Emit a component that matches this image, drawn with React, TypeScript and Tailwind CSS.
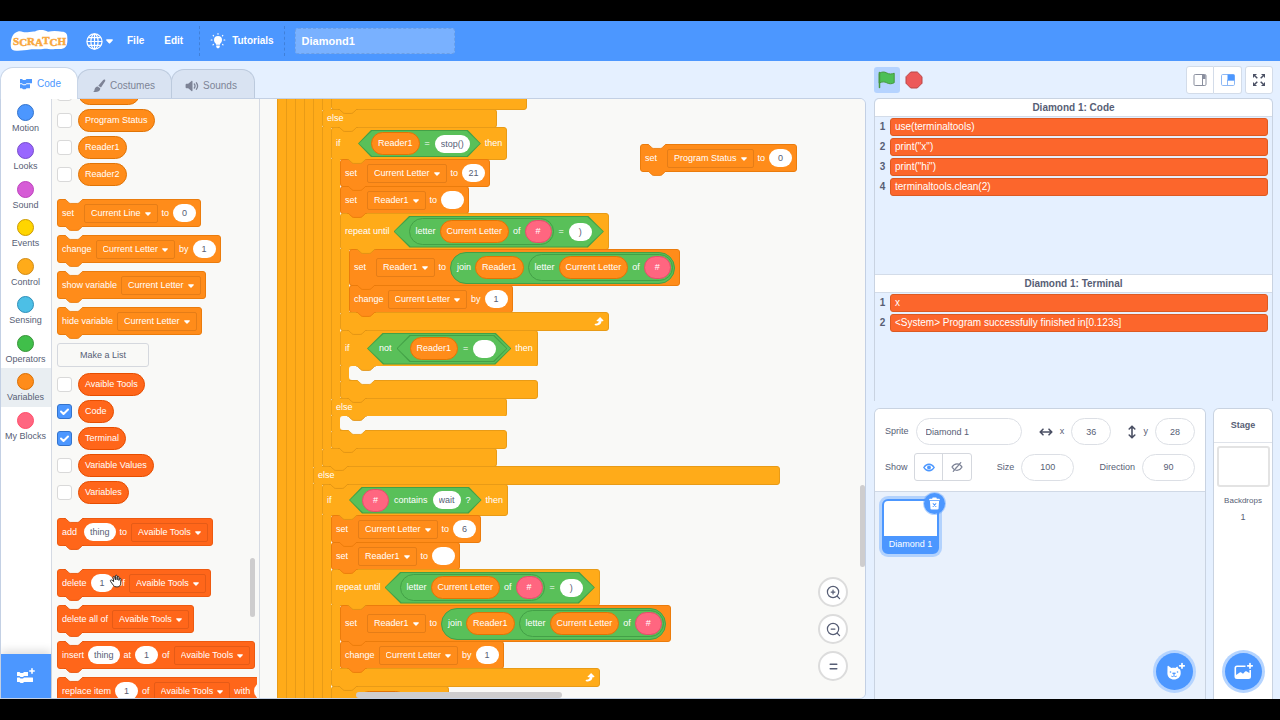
import type { ReactNode } from "react";
import { clsx } from "clsx";

const CATEGORIES = [
    { name: "Motion", dot: "bg-[#4c97ff] border-[#3373cc]" },
    { name: "Looks", dot: "bg-[#9966ff] border-[#774dcb]" },
    { name: "Sound", dot: "bg-[#d65cd6] border-[#bd42bd]" },
    { name: "Events", dot: "bg-[#ffd500] border-[#cc9900]" },
    { name: "Control", dot: "bg-[#ffab19] border-[#cf8b17]" },
    { name: "Sensing", dot: "bg-[#4cbfe6] border-[#2e8eb8]" },
    { name: "Operators", dot: "bg-[#40bf4a] border-[#389438]" },
    { name: "Variables", dot: "bg-[#ff8c1a] border-[#db6e00]" },
    { name: "My Blocks", dot: "bg-[#ff6680] border-[#ff4d6a]" },
];

const TONES = {
    data: { box: "bg-[#ff8c1a] border-[#eb7c0c]", fill: "#ff8c1a", line: "#e87a0a" },
    list: { box: "bg-[#ff661a] border-[#ee5a10]", fill: "#ff661a", line: "#e64d00" },
    control: { box: "bg-[#ffab19] border-[#e89b17]", fill: "#ffab19", line: "#dd9215" },
};

type Tone = keyof typeof TONES;

/* ---------- block pieces ---------- */

function Tab({ fill, line, className }: { fill: string; line: string; className: string }) {
    return (
        <svg viewBox="0 0 36 9" fill={fill} className={clsx("absolute z-10 h-[5px] w-5", className)}>
            <path
                d="M0 0c2 0 3 1 4 2l4 4c1 1 2 2 4 2h12c2 0 3-1 4-2l4-4c1-1 2-2 4-2"
                stroke={line}
                strokeWidth="1.5"
            />
        </svg>
    );
}

function Statement({ tone = "data", tall, first, children }: { tone?: Tone; tall?: boolean; first?: boolean; children: ReactNode }) {
    const t = TONES[tone];
    return (
        <div
            className={clsx(
                "relative -mb-px flex w-max items-center gap-1 rounded-[3px] border px-1",
                tall ? "h-[37px]" : "h-7",
                t.box
            )}
        >
            {first && <Tab fill="#f9f9f7" line={t.line} className="-top-px left-[6px]" />}
            {children}
            <Tab fill={t.fill} line={t.line} className="top-full left-[6px]" />
        </div>
    );
}

function Lead({ children }: { children: ReactNode }) {
    return <span className="min-w-[18px]">{children}</span>;
}

function Caret({ className }: { className: string }) {
    return (
        <svg viewBox="0 0 8 5" className={className} fill="#fff">
            <path d="M1 0h6c.8 0 1.2.8.6 1.4L4.7 4.5c-.4.4-1 .4-1.4 0L.4 1.4C-.2.8.2 0 1 0z" />
        </svg>
    );
}

function Drop({ value }: { value: string }) {
    return (
        <span className="relative flex">
            <select
                aria-label={value}
                className="field-sizing-content h-[19px] appearance-none rounded-[2px] border border-black/10 bg-transparent pr-4 pl-[6px] leading-none outline-none"
            >
                <option>{value}</option>
            </select>
            <Caret className="pointer-events-none absolute top-2 right-[7px] h-1 w-[6px]" />
        </span>
    );
}

function Slot({ value = "", label = "value" }: { value?: string; label?: string }) {
    return (
        <input
            type="text"
            aria-label={label}
            defaultValue={value}
            className="field-sizing-content h-[18px] min-w-[23px] rounded-full bg-white px-[6px] text-center leading-none text-[#575e75] outline-none"
        />
    );
}

function Var({ name, list }: { name?: string; list?: boolean }) {
    return (
        <span
            className={clsx(
                "flex h-[23px] items-center rounded-full border px-[6px]",
                list ? "border-[#e64d00] bg-[#ff661a]" : "border-[#e07406] bg-[#ff8c1a]",
                !name && "w-[62px]"
            )}
        >
            {name}
        </span>
    );
}

function Hash() {
    return (
        <span className="flex h-[23px] w-[27px] items-center justify-center rounded-full border border-[#e64d6a] bg-[#ff6680]">
            #
        </span>
    );
}

function Oval({ tall, children }: { tall?: boolean; children: ReactNode }) {
    return (
        <span
            className={clsx(
                "flex items-center gap-1 rounded-full border border-[#43a047] bg-[#59c059] pr-px pl-[6px]",
                tall ? "h-8" : "h-[27px]"
            )}
        >
            {children}
        </span>
    );
}

const HEX_13 =
    "[clip-path:polygon(13px_0,calc(100%_-_13px)_0,100%_50%,calc(100%_-_13px)_100%,13px_100%,0_50%)]";
const HEX_16 =
    "[clip-path:polygon(16px_0,calc(100%_-_16px)_0,100%_50%,calc(100%_-_16px)_100%,16px_100%,0_50%)]";

function Hex({ tall, pad = "pl-3 pr-[10px]", children }: { tall?: boolean; pad?: string; children: ReactNode }) {
    const clip = tall ? HEX_16 : HEX_13;
    return (
        <span className={clsx("flex bg-[#43a047] p-px", tall ? "h-8" : "h-[27px]", clip)}>
            <span className={clsx("flex items-center gap-[5px] bg-[#59c059]", pad, clip)}>{children}</span>
        </span>
    );
}

/* ---------- C shaped blocks ---------- */

function Bar({ height, foot, loop, children }: { height: string; foot?: boolean; loop?: boolean; children?: ReactNode }) {
    const t = TONES.control;
    return (
        <div className={clsx("relative -mb-px flex items-center gap-1 rounded-[3px] border px-1", height, t.box)}>
            {children}
            {loop && (
                <svg viewBox="0 0 24 24" className="ml-auto h-[11px] w-[11px]" fill="#fff">
                    <path d="M22.5 9.5 16.500 3a1.300 1.300 0 0 0-2 0L8.500 9.500c-.8 1 0 2 1 2h3c-.3 3.500-2.500 5.500-7.500 5.200-1.500 0-2 2.800-.3 3.300C12 22.300 18.300 18 18.500 11.500h3c1.300 0 1.800-1.200 1-2z" />
                </svg>
            )}
            <Tab fill={t.fill} line={t.line} className={clsx("top-full", foot ? "left-[6px]" : "left-[15px]")} />
        </div>
    );
}

function Mouth({ children }: { children?: ReactNode }) {
    return (
        <div className={clsx("relative flex", !children && "h-[14px] bg-[#ffab19]")}>
            <div className="relative z-[1] -mb-px w-[9px] shrink-0 border-l border-[#e89b17] bg-[#ffab19]" />
            {children ? (
                <div className="w-0">{children}</div>
            ) : (
                <div className="flex-1 rounded-l-[3px] bg-[#f9f9f7]">
                    <Tab fill="#f9f9f7" line="#e89b17" className="top-full left-4" />
                </div>
            )}
        </div>
    );
}

interface IWrap {
    head?: ReactNode;
    height?: string;
    width?: string;
    loop?: boolean;
    open?: boolean;
    hasElse?: boolean;
    other?: ReactNode;
    children?: ReactNode;
}

function Wrap({ head, height = "h-8", width, loop, open, hasElse, other, children }: IWrap) {
    return (
        <div className={clsx("flex w-max flex-col", width)}>
            {head && <Bar height={height}>{head}</Bar>}
            <Mouth>{children}</Mouth>
            {hasElse && (
                <>
                    <Bar height="h-[19px]">else</Bar>
                    <Mouth>{other}</Mouth>
                </>
            )}
            {!open && <Bar height="h-[19px]" foot loop={loop} />}
        </div>
    );
}

function LetterOf() {
    return (
        <Oval>
            letter
            <Var name="Current Letter" />
            of
            <Hash />
        </Oval>
    );
}

function ReadUntilBracket({ index }: { index: string }) {
    return (
        <>
            <Statement>
                <Lead>set</Lead>
                <Drop value="Current Letter" />
                to
                <Slot value={index} />
            </Statement>
            <Statement>
                <Lead>set</Lead>
                <Drop value="Reader1" />
                to
                <Slot />
            </Statement>
            <Wrap
                height="h-[37px]"
                loop
                head={
                    <>
                        repeat until
                        <Hex tall pad="pl-[14px] pr-[11px]">
                            <LetterOf />
                            <span>=</span>
                            <Slot value=")" />
                        </Hex>
                    </>
                }
            >
                <Statement tall>
                    <Lead>set</Lead>
                    <Drop value="Reader1" />
                    to
                    <Oval tall>
                        join
                        <Var name="Reader1" />
                        <LetterOf />
                    </Oval>
                </Statement>
                <Statement>
                    change
                    <Drop value="Current Letter" />
                    by
                    <Slot value="1" />
                </Statement>
            </Wrap>
        </>
    );
}

function Script() {
    const readerBranch = (
        <Wrap
            hasElse
            height="h-[33px]"
            head={
                <>
                    <Lead>if</Lead>
                    <Hex>
                        <Var name="Reader1" />
                        <span>=</span>
                        <Slot value="stop()" />
                    </Hex>
                    then
                </>
            }
        >
            <ReadUntilBracket index="21" />
            <Wrap
                height="h-[37px]"
                head={
                    <>
                        <Lead>if</Lead>
                        <Hex tall pad="pl-[11px] pr-[3px]">
                            not
                            <Hex>
                                <Var name="Reader1" />
                                <span>=</span>
                                <Slot />
                            </Hex>
                        </Hex>
                        then
                    </>
                }
            />
        </Wrap>
    );

    const waitBranch = (
        <Wrap
            open
            head={
                <>
                    <Lead>if</Lead>
                    <Hex>
                        <Hash />
                        contains
                        <Slot value="wait" />
                        ?
                    </Hex>
                    then
                </>
            }
        >
            <ReadUntilBracket index="6" />
            <Wrap
                open
                width="min-w-[118px]"
                head={
                    <>
                        <Lead>if</Lead>
                        <Var name="Reader1" />
                    </>
                }
            />
        </Wrap>
    );

    const dispatch = (
        <Wrap open hasElse width="min-w-[467px]" other={waitBranch}>
            <Wrap hasElse width="min-w-[175px]" other={readerBranch}>
                <Bar height="h-[19px] w-[196px]" foot />
            </Wrap>
        </Wrap>
    );

    return (
        <Wrap open>
            <Wrap open>
                <Wrap open>
                    <Wrap open>{dispatch}</Wrap>
                </Wrap>
            </Wrap>
        </Wrap>
    );
}

/* ---------- palette ---------- */

function VarRow({ name, list, checked }: { name?: string; list?: boolean; checked?: boolean }) {
    return (
        <label className="flex h-[27px] items-center gap-[6px]">
            <span className="relative flex">
                <input
                    type="checkbox"
                    defaultChecked={checked}
                    className="peer h-[15px] w-[15px] appearance-none rounded-[3px] border border-[#d9d9d9] bg-white checked:border-[#3373cc] checked:bg-[#4c97ff]"
                />
                <svg
                    viewBox="0 0 15 15"
                    className="pointer-events-none absolute inset-0 hidden peer-checked:block"
                    fill="none"
                    stroke="#fff"
                    strokeWidth="2"
                    strokeLinecap="round"
                    strokeLinejoin="round"
                >
                    <path d="M4 7.5l2.500 2.500L11 5.500" />
                </svg>
            </span>
            <Var name={name} list={list} />
        </label>
    );
}

function Palette() {
    return (
        <div className="relative w-[208px] shrink-0 overflow-hidden border-r border-[#d5dae3] bg-[#f9f9f7]">
            <div className="absolute inset-y-0 left-0 w-[205px] overflow-hidden pl-[5px] text-white">
                <div className="-mt-[19px]">
                    <VarRow />
                    <VarRow name="Program Status" />
                    <VarRow name="Reader1" />
                    <VarRow name="Reader2" />
                </div>
                <div className="mt-[11px] flex flex-col gap-[9px]">
                    <Statement first>
                        <Lead>set</Lead>
                        <Drop value="Current Line" />
                        to
                        <Slot value="0" />
                    </Statement>
                    <Statement first>
                        change
                        <Drop value="Current Letter" />
                        by
                        <Slot value="1" />
                    </Statement>
                    <Statement first>
                        show variable
                        <Drop value="Current Letter" />
                    </Statement>
                    <Statement first>
                        hide variable
                        <Drop value="Current Letter" />
                    </Statement>
                    <button className="h-6 w-[92px] rounded-[3px] border border-[#d5d8de] text-[#575e75]">Make a List</button>
                </div>
                <div className="mt-1">
                    <VarRow list name="Avaible Tools" />
                    <VarRow list name="Code" checked />
                    <VarRow list name="Terminal" checked />
                    <VarRow list name="Variable Values" />
                    <VarRow list name="Variables" />
                </div>
                <div className="mt-3">
                    <Statement tone="list" first>
                        <Lead>add</Lead>
                        <Slot value="thing" />
                        to
                        <Drop value="Avaible Tools" />
                    </Statement>
                </div>
                <div className="mt-6 flex flex-col gap-[9px]">
                    <Statement tone="list" first>
                        delete
                        <Slot value="1" />
                        of
                        <Drop value="Avaible Tools" />
                    </Statement>
                    <Statement tone="list" first>
                        delete all of
                        <Drop value="Avaible Tools" />
                    </Statement>
                    <Statement tone="list" first>
                        insert
                        <Slot value="thing" />
                        at
                        <Slot value="1" />
                        of
                        <Drop value="Avaible Tools" />
                    </Statement>
                    <Statement tone="list" first>
                        replace item
                        <Slot value="1" />
                        of
                        <Drop value="Avaible Tools" />
                        with
                        <Slot value="thing" />
                    </Statement>
                </div>
            </div>
            <div className="absolute top-[459px] right-1 h-[59px] w-[5px] rounded-full bg-[#cecdce]" />
            {/* open hand pointer */}
            <svg viewBox="0 0 24 24" className="absolute top-[475px] left-[57px] z-20 h-[14px] w-[14px]" fill="#fff" stroke="#222" strokeWidth="1.6" strokeLinejoin="round">
                <path d="M8 13 5 10.500c-1.500-1-3.500.5-2.500 2L8 20c1 1.500 2.500 2 4.500 2h2c3.500 0 5.500-2.500 5.500-6l.5-7c0-2-2.500-2-2.800-.2L17 11V5.500c0-2-2.800-2-3 0V10 3.500c-.2-2-3-2-3 0V10L9.800 5.300C9.200 3.500 6.700 4 7 6z" />
            </svg>
        </div>
    );
}

function Categories() {
    return (
        <nav className="flex w-[51px] shrink-0 flex-col justify-between border-r border-[#d5dae3] bg-white">
            <div className="flex h-[346px] flex-col">
                {CATEGORIES.map((c) => (
                    <button
                        key={c.name}
                        className={clsx(
                            "flex flex-1 flex-col items-center gap-[2px] pt-[5px] pr-px text-[9px] leading-[10px] whitespace-nowrap text-[#575e75]",
                            c.name === "Variables" && "bg-[#e9eef2]"
                        )}
                    >
                        <span className={clsx("h-[17px] w-[17px] shrink-0 rounded-full border", c.dot)} />
                        {c.name}
                    </button>
                ))}
            </div>
            <button
                aria-label="Add Extension"
                className="flex h-11 items-center justify-center bg-[#4c97ff] shadow-[0_-4px_8px_rgba(0,0,0,0.12)]"
            >
                <svg viewBox="0 0 20 16" className="h-4 w-5" fill="#fff">
                    <path d="M1.500 4h2l1 1h2.500l1-1h4v4H8l-1 1H4.500l-1-1h-2A.5.5 0 0 1 1 7.500V4.500a.5.5 0 0 1 .5-.5z" />
                    <path d="M1.500 9.600h2l1 1H7l1-1h8.500a.5.5 0 0 1 .5.5v3.400a.5.5 0 0 1-.5.500H8l-1 1H4.500l-1-1h-2a.5.5 0 0 1-.5-.5v-3.400a.5.5 0 0 1 .5-.5z" />
                    <path d="M16 .8v4.400M13.800 3h4.400" stroke="#fff" strokeWidth="1.600" strokeLinecap="round" />
                </svg>
            </button>
        </nav>
    );
}

/* ---------- workspace ---------- */

function ZoomButton({ label, children }: { label: string; children: ReactNode }) {
    return (
        <button
            aria-label={label}
            className="flex h-[30px] w-[30px] items-center justify-center rounded-full border-2 border-[#dcdcdc] bg-white"
        >
            <svg viewBox="0 0 16 16" className="h-[15px] w-[15px]" fill="none" stroke="#575e75" strokeWidth="1.3" strokeLinecap="round">
                {children}
            </svg>
        </button>
    );
}

function Workspace() {
    return (
        <main className="relative min-w-0 flex-1 overflow-hidden bg-[#f9f9f7] text-white">
            <div className="absolute -top-2 left-[17px]">
                <Script />
            </div>
            <div className="absolute top-[45px] left-[380px]">
                <Statement first>
                    <Lead>set</Lead>
                    <Drop value="Program Status" />
                    to
                    <Slot value="0" />
                </Statement>
            </div>
            <div className="absolute right-[17px] bottom-[17px] z-20 flex flex-col gap-[7px]">
                <ZoomButton label="Zoom in">
                    <circle cx="7.5" cy="7.5" r="6" />
                    <path d="M12 12l2.500 2.500M5.500 7.500h4M7.500 5.500v4" />
                </ZoomButton>
                <ZoomButton label="Zoom out">
                    <circle cx="7.5" cy="7.5" r="6" />
                    <path d="M12 12l2.500 2.500M5.500 7.500h4" />
                </ZoomButton>
                <ZoomButton label="Reset zoom">
                    <path d="M4.500 5.500h7M4.500 10.500h7" strokeWidth="1.600" />
                </ZoomButton>
            </div>
            <div className="absolute top-[386px] right-0 h-[82px] w-[5px] rounded-full bg-[#cecdce]" />
            <div className="absolute bottom-0 left-24 z-20 h-[6px] w-[206px] rounded-full bg-[#cecdce]" />
        </main>
    );
}

/* ---------- top bar and tabs ---------- */

function MenuBar() {
    return (
        <header className="flex h-10 shrink-0 items-center bg-[#4c97ff] pl-[10px] text-[10px] font-bold text-white">
            <a href="#home" aria-label="Scratch">
                <svg viewBox="0 0 58 24" className="h-6 w-[58px]">
                    <path
                        d="M5 4c3-2 5-2.500 8-1 4 1 8-1 12-.5 4-2 9-2 13 .2 5-1.200 10-.7 14 0 4 0 5.500 2.500 5.300 6 .5 5-.3 9.500-4.300 10.800-3 1-5 .2-8 .5-5 .8-8-.8-12 0-5 1-9-.5-13 .5-4 1.200-8 .5-12 1.200C3.500 22.200 1 20.800.800 17.500.500 12 1.500 6.500 5 4z"
                        fill="#fff"
                    />
                    <text
                        x="3"
                        y="16"
                        dy="0 1 -1 1 -2 2 -1"
                        fontFamily="Liberation Serif, serif"
                        fontWeight="bold"
                        fontSize="11"
                        fill="#f9a83f"
                        stroke="#f9a83f"
                        strokeWidth=".5"
                    >
                        SCRATCH
                    </text>
                </svg>
            </a>
            <button aria-label="Language" className="ml-[18px] flex items-center gap-[3px]">
                <svg viewBox="0 0 18 18" className="h-[17px] w-[17px]" fill="none" stroke="#fff" strokeWidth="1.3">
                    <circle cx="9" cy="9" r="8" />
                    <ellipse cx="9" cy="9" rx="3.8" ry="8" />
                    <path d="M9 1v16M1 9h16M2.300 5h13.400M2.300 13h13.400" />
                </svg>
                <Caret className="h-[5px] w-[7px]" />
            </button>
            <button className="ml-[14px]">File</button>
            <button className="ml-5">Edit</button>
            <div className="ml-4 flex h-[30px] items-center border-x border-dashed border-black/15 px-[10px]">
                <button className="flex items-center gap-[6px]">
                    <svg viewBox="0 0 16 16" className="h-4 w-4" fill="#fff">
                        <path d="M8 3a4 4 0 0 0-4 4c0 1.600.8 2.500 1.500 3.300.4.500.5.900.5 1.400h4c0-.5.1-.9.5-1.400C11.200 9.500 12 8.600 12 7a4 4 0 0 0-4-4zM6.200 12.500h3.600v1c0 .8-.8 1.800-1.800 1.800s-1.800-1-1.800-1.800z" />
                        <path
                            d="M8 .6v.6M2 7h-.8M14.800 7H14M3.600 2.800l-.4-.4M12.400 2.800l.4-.4M3.400 11.400l-.4.4M12.600 11.400l.4.4"
                            stroke="#fff"
                            strokeWidth="1.2"
                            strokeLinecap="round"
                        />
                    </svg>
                    Tutorials
                </button>
            </div>
            <input
                aria-label="Project title"
                defaultValue="Diamond1"
                className="ml-[10px] h-[26px] w-40 rounded-[3px] border border-dashed border-black/10 bg-white/25 px-[6px] text-[11px] outline-none"
            />
        </header>
    );
}

function Tabs() {
    const idle = "flex h-[29px] items-center gap-1 rounded-t-[13px] border border-b-0 border-[#bccadd] bg-[#d9e3f2] pt-1 text-[#7d8396]";
    return (
        <div className="flex h-[37px] items-end text-[10px]">
            <button className="z-10 -mb-px flex h-8 w-[78px] items-center justify-center gap-1 rounded-t-[13px] border border-b-0 border-[#c9d6e8] bg-white pt-px pl-[2px] text-[#4c97ff]">
                <svg viewBox="0 0 14 12" className="h-3 w-[14px]" fill="#4c97ff">
                    <path d="M1 1h2l1 1h2.500l1-1H13v4.200H7.500l-1 1H4l-1-1H1z" />
                    <path d="M1 6.300h2l1 1h2.500l1-1H11v4H7.500l-1 1H4l-1-1H1z" />
                </svg>
                Code
            </button>
            <button className={clsx(idle, "-ml-px w-[95px] pl-[14px]")}>
                <svg viewBox="0 0 14 14" className="h-[14px] w-[14px]" fill="#7d8396">
                    <path d="M12.800.6c.6.4.6 1 .3 1.600L9 8.600 6.300 6.700 11 1.200c.5-.6 1.200-.9 1.800-.6zM5.700 7.500l2.500 1.800c.3 2.500-2.200 4.200-7.400 3.700 1-.3 1.600-1 1.700-2.200.2-1.900 1.600-3.300 3.200-3.300z" />
                </svg>
                Costumes
            </button>
            <button className={clsx(idle, "-ml-px w-[84px] pl-[13px]")}>
                <svg viewBox="0 0 14 12" className="h-3 w-[14px]" fill="#7d8396">
                    <path d="M1.500 3.800h1.700L6.500 1c.5-.4 1-.2 1 .5v9c0 .7-.5.9-1 .5L3.200 8.200H1.500C1 8.200.6 7.900.6 7.300V4.700c0-.6.4-.9.9-.9z" />
                    <path d="M9.300 4c.9 1.200.9 2.800 0 4M11.400 2.800c1.500 2 1.500 4.400 0 6.400" fill="none" stroke="#7d8396" strokeWidth="1.3" strokeLinecap="round" />
                </svg>
                Sounds
            </button>
        </div>
    );
}

/* ---------- stage side ---------- */

function StageControls() {
    const box = "flex h-7 w-7 items-center justify-center bg-white border-[#d3dce9]";
    return (
        <div className="flex h-[37px] items-center">
            <button aria-label="Go" className="flex h-[26px] w-[26px] items-center justify-center rounded-[3px] bg-[#b5d3ff]">
                <svg viewBox="0 0 18 18" className="h-[18px] w-[18px]" fill="#4cbf56" stroke="#45993d" strokeWidth="1" strokeLinejoin="round" strokeLinecap="round">
                    <path d="M1.500 2.200c2.500-1.700 5-1.500 7.300-.2 2.300 1.300 4.800 1.300 7.400.2v9.500c-2.600 1.400-5.100 1.400-7.400.1s-4.800-1.300-7.300.2z" />
                    <path d="M1.500 1.500v15" strokeWidth="1.500" />
                </svg>
            </button>
            <button aria-label="Stop" className="ml-[5px]">
                <svg viewBox="0 0 18 18" className="h-[18px] w-[18px]">
                    <path d="M5.700 1h6.600L17 5.700v6.600L12.300 17H5.700L1 12.300V5.700z" fill="#ec5959" stroke="#b84848" strokeLinejoin="round" />
                </svg>
            </button>
            <button aria-label="Small stage" className={clsx(box, "ml-auto rounded-l-[3px] border")}>
                <svg viewBox="0 0 14 12" className="h-3 w-[14px]" fill="none" stroke="#8a8f9e">
                    <rect x="1" y=".5" width="12" height="11" rx="1.2" />
                    <path d="M9.500.5v11" />
                    <path d="M10 1h2.500v4H10z" fill="#8a8f9e" stroke="none" />
                </svg>
            </button>
            <button aria-label="Large stage" className={clsx(box, "rounded-r-[3px] border border-l-0")}>
                <svg viewBox="0 0 14 12" className="h-3 w-[14px]" fill="none" stroke="#8db8f5">
                    <rect x=".5" y=".5" width="13" height="11" rx="1.2" />
                    <path d="M6.500 6v5.500M6.500 6H13" />
                    <path d="M6.500.5H13a.5.5 0 0 1 .5.5v5.500h-7z" fill="#4c97ff" stroke="none" />
                </svg>
            </button>
            <button aria-label="Full screen" className={clsx(box, "ml-[3px] rounded-[3px] border")}>
                <svg viewBox="0 0 14 14" className="h-[14px] w-[14px]" fill="#4b5064" stroke="#4b5064" strokeWidth="1.5">
                    <path d="M5.300 5.300 3 3M8.700 5.300 11 3M5.300 8.700 3 11M8.700 8.700 11 11" />
                    <path d="M1 1h4L1 5zM13 1v4L9 1zM1 13V9l4 4zM13 13H9l4-4z" stroke="none" />
                </svg>
            </button>
        </div>
    );
}

function ListMonitor({ title, rows, className }: { title: string; rows: string[]; className: string }) {
    return (
        <section className={className}>
            <h2 className="flex h-[18px] items-center justify-center border-b border-[#d3dce9] bg-white text-[10px] font-bold">{title}</h2>
            <ol className="mt-px flex flex-col gap-[2px] pr-1">
                {rows.map((row, i) => (
                    <li key={row} className="flex items-center text-[10px]">
                        <span className="w-[15px] text-center font-bold">{i + 1}</span>
                        <span className="flex h-[18px] flex-1 items-center rounded-[3px] border border-[#dc5a22] bg-[#fc662c] px-1 text-white">{row}</span>
                    </li>
                ))}
            </ol>
        </section>
    );
}

function Field({ id, label, value, width, left, icon }: { id: string; label: string; value: string; width: string; left?: boolean; icon?: ReactNode }) {
    return (
        <div className="flex items-center gap-[7px]">
            {icon}
            <label htmlFor={id}>{label}</label>
            <input
                id={id}
                defaultValue={value}
                className={clsx("h-[27px] rounded-full border border-[#dcdfe5] bg-white outline-none", left ? "px-[9px]" : "text-center", width)}
            />
        </div>
    );
}

function SpriteInfo() {
    return (
        <div className="flex flex-col gap-2 border-b border-[#d0d9e6] bg-white px-[10px] pt-[9px] pb-[10px]">
            <div className="flex items-center justify-between">
                <Field id="sprite" label="Sprite" value="Diamond 1" width="w-[106px]" left />
                <Field
                    id="x"
                    label="x"
                    value="36"
                    width="w-10"
                    icon={
                        <svg viewBox="0 0 14 8" className="h-2 w-[14px]" fill="none" stroke="#4b5064" strokeWidth="1.6" strokeLinecap="round" strokeLinejoin="round">
                            <path d="M1.500 4h11M4 1.200 1.200 4 4 6.800M10 1.200 12.800 4 10 6.800" />
                        </svg>
                    }
                />
                <Field
                    id="y"
                    label="y"
                    value="28"
                    width="w-10"
                    icon={
                        <svg viewBox="0 0 8 14" className="h-[14px] w-2" fill="none" stroke="#4b5064" strokeWidth="1.6" strokeLinecap="round" strokeLinejoin="round">
                            <path d="M4 1.500v11M1.200 4 4 1.200 6.800 4M1.200 10 4 12.800 6.800 10" />
                        </svg>
                    }
                />
            </div>
            <div className="flex items-center justify-between">
                <div className="flex items-center gap-[6px]">
                    <span>Show</span>
                    <div className="flex h-7 divide-x divide-[#d5d8de] rounded-[3px] border border-[#d5d8de]">
                        <button aria-label="Show sprite" className="w-7 px-2">
                            <svg viewBox="0 0 14 10" className="h-[9px] w-3" fill="none" stroke="#4c97ff" strokeWidth="1.7">
                                <path d="M1 5c3-5.200 9-5.200 12 0-3 5.200-9 5.200-12 0z" />
                                <circle cx="7" cy="5" r="1.4" fill="#4c97ff" />
                            </svg>
                        </button>
                        <button aria-label="Hide sprite" className="w-7 px-2">
                            <svg viewBox="0 0 14 12" className="h-[10px] w-3" fill="none" stroke="#7d8396" strokeWidth="1.5" strokeLinecap="round">
                                <path d="M1 6c3-5.200 9-5.200 12 0-3 5.200-9 5.200-12 0zM2.500 11.200 11.500.8M5.500 7.500l3-3.200" />
                            </svg>
                        </button>
                    </div>
                </div>
                <Field id="size" label="Size" value="100" width="w-[53px]" />
                <Field id="direction" label="Direction" value="90" width="w-[53px]" />
            </div>
        </div>
    );
}

function RoundButton({ label, children }: { label: string; children: ReactNode }) {
    return (
        <button
            aria-label={label}
            className="flex h-[37px] w-[37px] items-center justify-center rounded-full bg-[#4c97ff] ring-[3px] ring-[#b5d4ff]"
        >
            <svg viewBox="0 0 20 20" className="h-5 w-5" fill="#fff">
                {children}
                <path d="M17 1.500v4.600M14.700 3.800h4.600" stroke="#fff" strokeWidth="1.700" strokeLinecap="round" />
            </svg>
        </button>
    );
}

function StageSide() {
    return (
        <aside className="flex w-[399px] shrink-0 flex-col text-[#575e75]">
            <StageControls />
            <div className="flex h-[303px] shrink-0 flex-col rounded-t-[5px] border border-b-0 border-[#c9d3e1]">
                <ListMonitor
                    className="h-[176px] overflow-hidden rounded-t-[5px] border-b border-[#d3dce9]"
                    title="Diamond 1: Code"
                    rows={["use(terminaltools)", 'print("x")', 'print("hi")', "terminaltools.clean(2)"]}
                />
                <ListMonitor
                    className="flex-1"
                    title="Diamond 1: Terminal"
                    rows={["x", "<System> Program successfully finished in[0.123s]"]}
                />
            </div>
            <div className="mt-[7px] flex flex-1 gap-[7px] text-[9px]">
                <section className="relative flex flex-1 flex-col overflow-hidden rounded-t-[6px] border border-b-0 border-[#c9d3e1] bg-[#e9f1fc]">
                    <SpriteInfo />
                    <div className="p-[7px]">
                        <div className="relative w-[57px] rounded-[6px] border-2 border-[#4c97ff] bg-[#4c97ff] ring-[3px] ring-[#4c97ff]/35">
                            <div className="h-[35px] rounded-t-[4px] bg-white" />
                            <p className="h-4 text-center leading-4 text-white">Diamond 1</p>
                            <button
                                aria-label="Delete"
                                className="absolute -top-2 -right-2 flex h-[21px] w-[21px] items-center justify-center rounded-full bg-[#4c97ff] ring-1 ring-[#4c97ff]/40"
                            >
                                <svg viewBox="0 0 12 14" className="h-[13px] w-[11px]" fill="#fff">
                                    <path d="M4 .5h4l.6 1.200H11c.5 0 .8.3.8.8v.9H.2v-.9c0-.5.3-.8.8-.8h2.400zM1 4.200h10l-.6 8.300c0 .6-.5 1-1.100 1H2.700c-.6 0-1.100-.4-1.100-1z" />
                                    <path d="M4.500 7.200l3 3M7.500 7.200l-3 3" stroke="#4c97ff" strokeWidth="1.1" strokeLinecap="round" />
                                </svg>
                            </button>
                        </div>
                    </div>
                    <div className="absolute right-3 bottom-[9px]">
                        <RoundButton label="Choose a Sprite">
                            <path d="M2.500 4.500c0-.6.6-.8 1-.5L6.300 6c1.300-.3 2.600-.3 4 0l2-1.500 1.500 2.500 1.200.3c.6 1.200.8 2.600.7 4.200C15.500 15.300 12.500 17.500 9 17.500S2.500 15.300 2.400 11.500z" />
                            <path d="M7.500 11h3L9 12.500zM9 12.500v1.300M6.300 14c1 .9 2 .7 2.700-.3.7 1 1.700 1.200 2.700.3" fill="#4c97ff" stroke="#4c97ff" strokeWidth=".8" />
                            <circle cx="5.5" cy="10" r=".8" fill="#4c97ff" />
                            <circle cx="12.5" cy="10" r=".8" fill="#4c97ff" />
                        </RoundButton>
                    </div>
                </section>
                <section className="relative flex w-[60px] flex-col items-center rounded-t-[6px] border border-b-0 border-[#c9d3e1] bg-white">
                    <h3 className="flex h-[34px] w-full items-center justify-center border-b border-[#dfe3ea] font-bold">Stage</h3>
                    <button aria-label="Backdrop" className="mt-[3px] h-[41px] w-[53px] rounded-[3px] border-2 border-[#e3e3e3] bg-white" />
                    <p className="mt-2 text-[8px] leading-[12px]">Backdrops</p>
                    <p className="mt-1 leading-[12px]">1</p>
                    <div className="absolute bottom-[9px]">
                        <RoundButton label="Choose a Backdrop">
                            <path d="M12.500 3.500H4A2.500 2.500 0 0 0 1.500 6v8.500A2.500 2.500 0 0 0 4 17h11.500a2.500 2.500 0 0 0 2.500-2.500V8h-1.600v3l-2.600-1.600c-.6-.4-1.200-.3-1.700.2L10 11.800 8.300 10.600c-.5-.4-1.100-.4-1.600 0L3.100 13V6c0-.5.4-.9.9-.9h8.500z" />
                        </RoundButton>
                    </div>
                </section>
            </div>
        </aside>
    );
}

export default function App() {
    return (
        <div className="flex h-screen flex-col overflow-hidden bg-black py-[21px] font-['Liberation_Sans',Arial,sans-serif] text-[9px] leading-none whitespace-nowrap">
            <MenuBar />
            <div className="flex min-h-0 flex-1 gap-2 bg-[#e5f0ff] pr-[7px]">
                <div className="flex min-w-0 flex-1 flex-col">
                    <Tabs />
                    <div className="flex min-h-0 flex-1 overflow-hidden rounded-r-[6px] border border-[#c3d0e4]">
                        <Categories />
                        <Palette />
                        <Workspace />
                    </div>
                </div>
                <StageSide />
            </div>
        </div>
    );
}
